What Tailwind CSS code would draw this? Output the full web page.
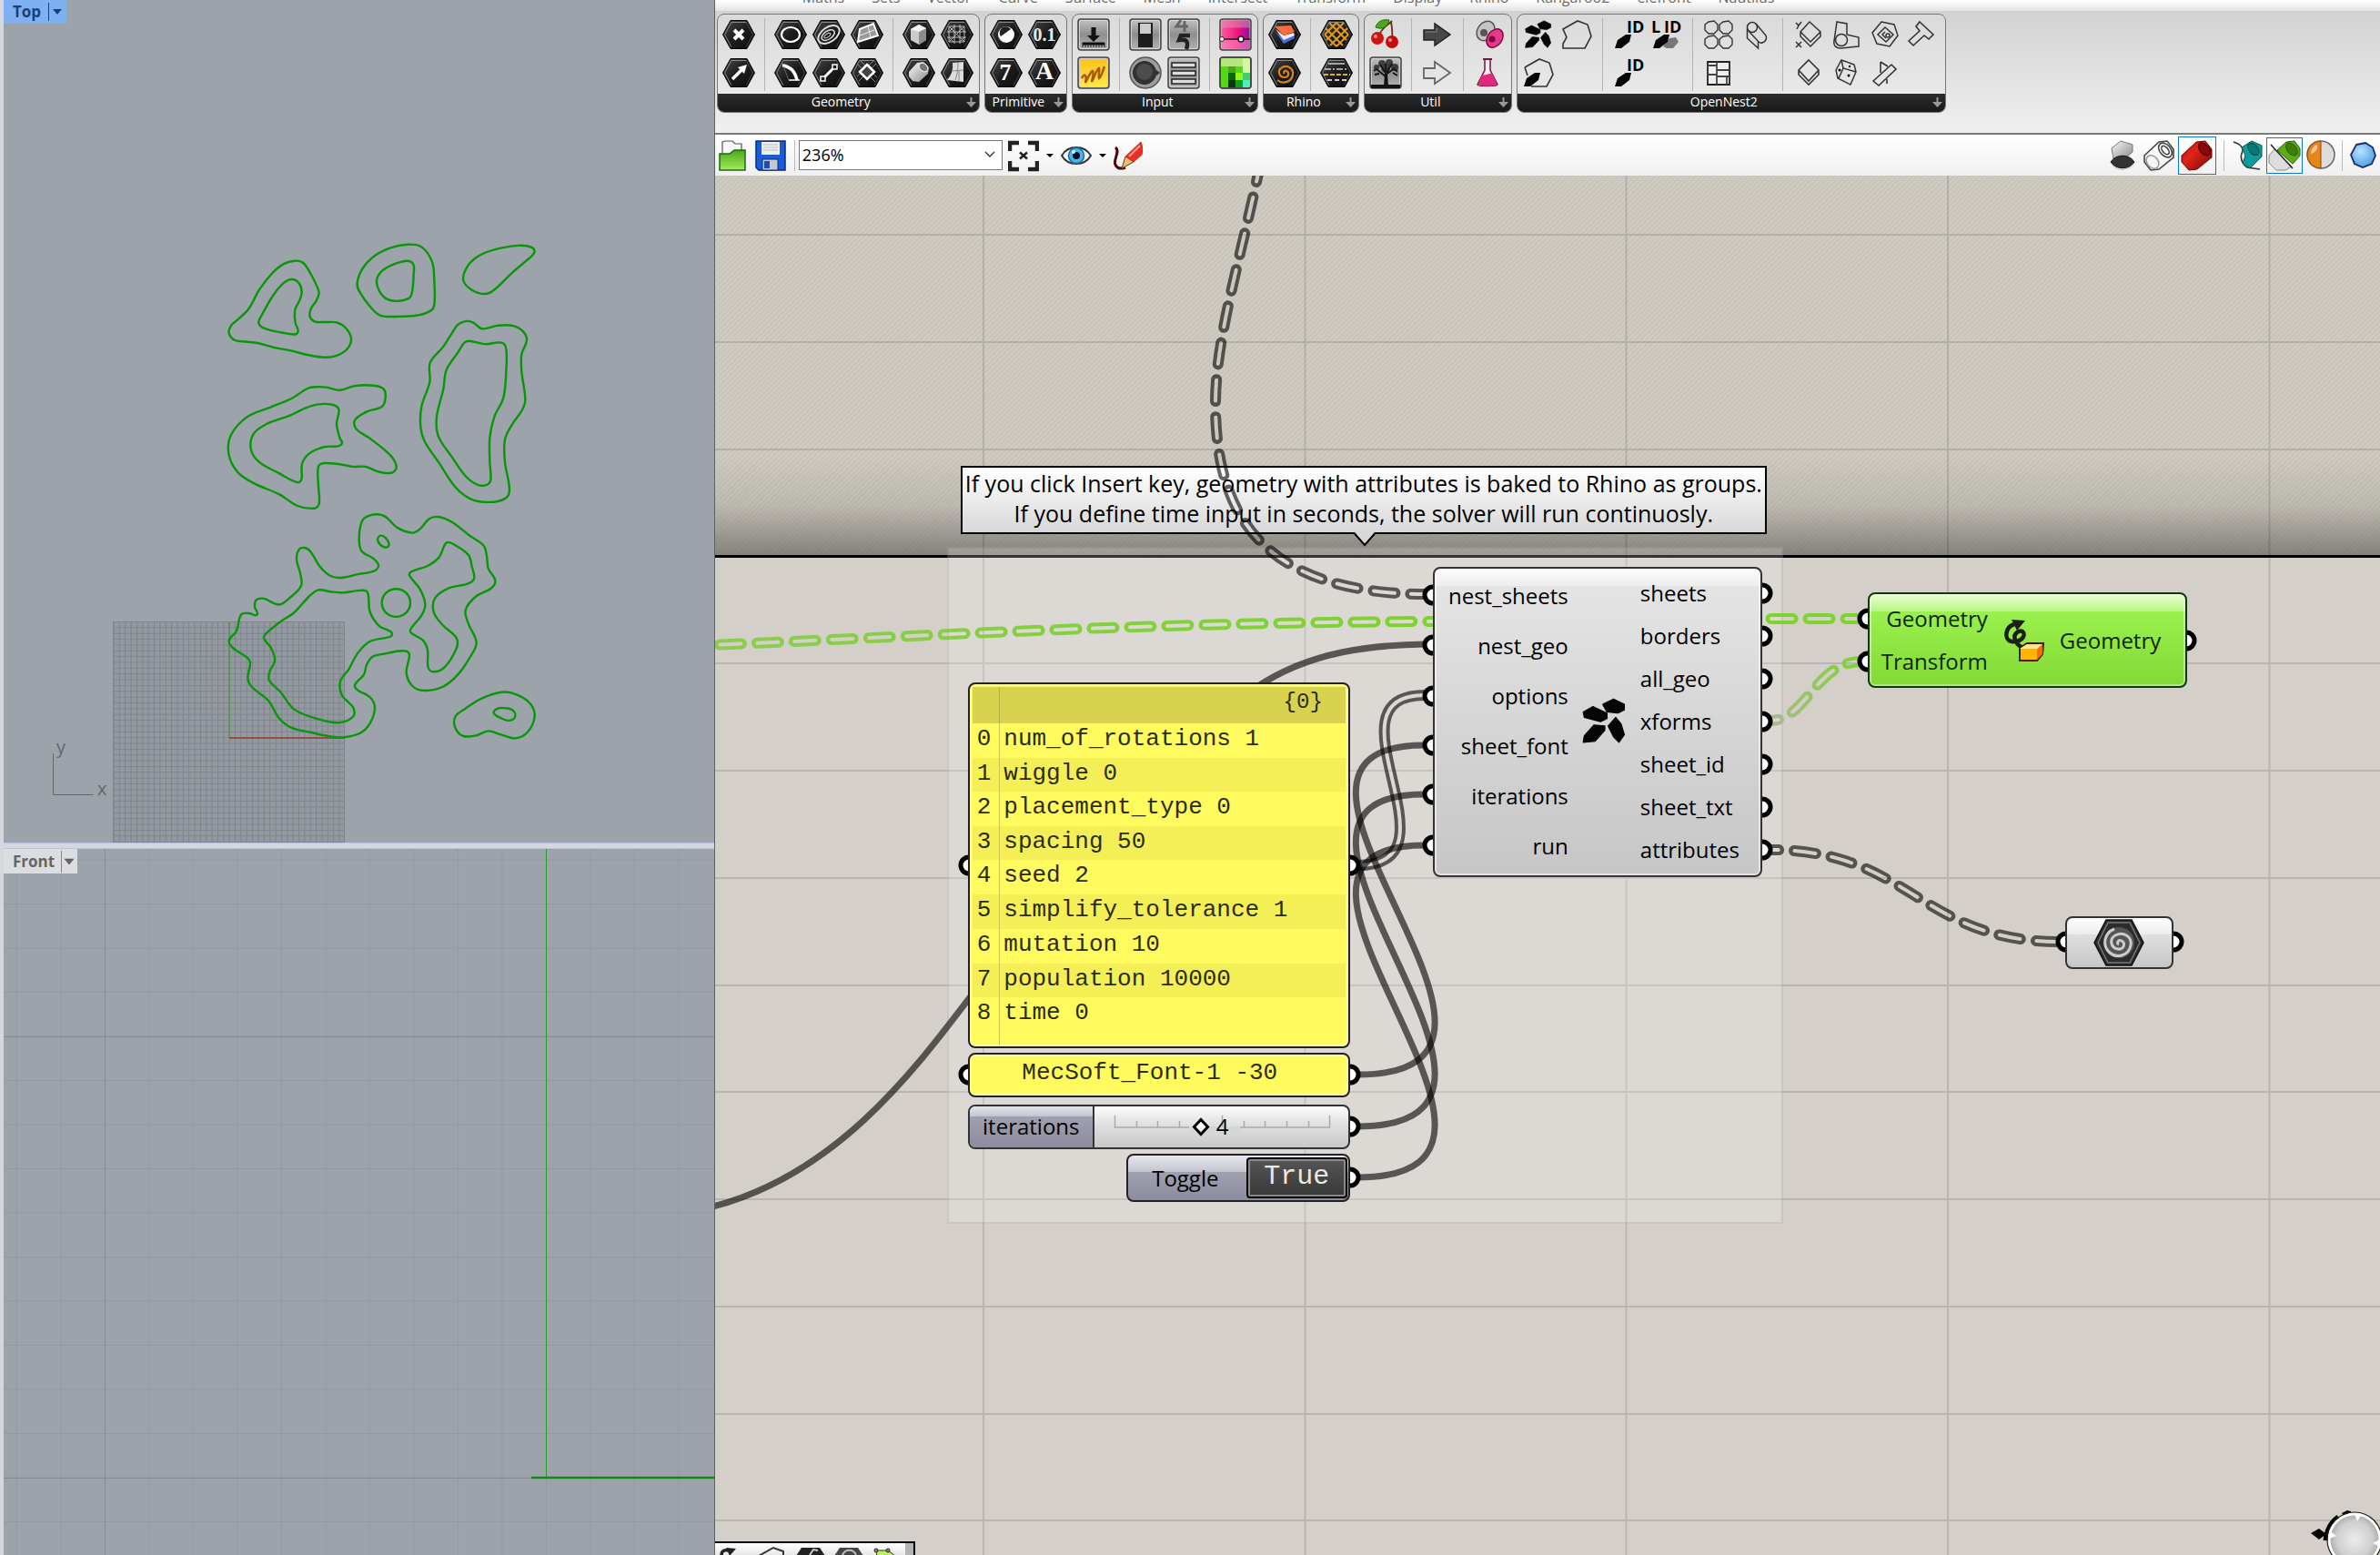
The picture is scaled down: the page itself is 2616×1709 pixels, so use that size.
<!DOCTYPE html>
<html lang="en">
<head>
<meta charset="utf-8">
<title>Grasshopper – OpenNest2</title>
<script src="https://cdn.jsdelivr.net/npm/@tailwindcss/browser@4"></script>
</head>
<body class="bg-[#d5d7dc] font-['Open_Sans','Noto_Sans',sans-serif] text-black">

<!-- shared gradients and icon shapes -->
<svg class="absolute size-0" aria-hidden="true">
  <defs>
    <linearGradient id="gHex" x1="0" y1="0" x2="1" y2="1"><stop offset="0" stop-color="#4a4a4a"/><stop offset=".5" stop-color="#1c1c1c"/><stop offset="1" stop-color="#0c0c0c"/></linearGradient>
    <linearGradient id="gBtn" x1="0" y1="0" x2="0" y2="1"><stop offset="0" stop-color="#c4c4c4"/><stop offset=".5" stop-color="#8e8e8e"/><stop offset="1" stop-color="#b4b4b4"/></linearGradient>
    <linearGradient id="gPink" x1="0" y1="0" x2="1" y2="0"><stop offset="0" stop-color="#ff5a9e"/><stop offset=".6" stop-color="#f0127c"/><stop offset="1" stop-color="#8c12a0"/></linearGradient>
    <linearGradient id="gYellow" x1="0" y1="0" x2="0" y2="1"><stop offset="0" stop-color="#ffc21a"/><stop offset="1" stop-color="#ffe84a"/></linearGradient>
    <linearGradient id="gFolder" x1="0" y1="0" x2="0" y2="1"><stop offset="0" stop-color="#4aa81c"/><stop offset="1" stop-color="#a4ec58"/></linearGradient>
    <linearGradient id="gRed" x1="0" y1="0" x2="1" y2="1"><stop offset="0" stop-color="#c01010"/><stop offset=".4" stop-color="#e02418"/><stop offset="1" stop-color="#7a0404"/></linearGradient>
    <linearGradient id="gGrey" x1="0" y1="0" x2="1" y2="1"><stop offset="0" stop-color="#fafafa"/><stop offset="1" stop-color="#8c8c8c"/></linearGradient>
    <radialGradient id="gBlue" cx=".4" cy=".35" r=".7"><stop offset="0" stop-color="#b8e2ff"/><stop offset="1" stop-color="#4a9ae0"/></radialGradient>
    <radialGradient id="gBall" cx=".5" cy=".5" r=".5"><stop offset="0" stop-color="#ececec"/><stop offset=".7" stop-color="#cfcfcf"/><stop offset="1" stop-color="#aaa"/></radialGradient>
    <g id="hex"><path d="M9 2.500h18l8.500 15.500-8.500 15.500H9L.5 18z" fill="url(#gHex)" stroke="#000"/><path d="M9.800 4.500h16.400l7.300 13.500-7.300 13.500" fill="none" stroke="#555" stroke-width=".8"/><path d="M26.200 4.500H9.800L2.600 18l7.200 13.500" fill="none" stroke="#888" stroke-width="1"/></g>
    <g id="sq"><rect x="1" y="1" width="34" height="34" rx="3" fill="url(#gBtn)" stroke="#444" stroke-width="1.500"/><rect x="2.500" y="2.500" width="31" height="31" rx="2" fill="none" stroke="#ddd" stroke-width=".8"/></g>
    <g id="plus"><path d="M5.500 0v9" stroke="#999" stroke-width="2"/><path d="M0 5h11l-5.500 6z" fill="#999"/></g>
    <g id="leaves" fill="#050607" stroke="#050607" stroke-linejoin="round"><path d="M1 13l9-5 13 6v5l-6 3-15-4z"/><path d="M19 6l10-5 10 5v5l-6 3-10-1z"/><path d="M1 41l1-6 9-10 10 1v4l-9 10z"/><path d="M24 26l7-8 5 6 3 10-5 7-5-5z"/></g>
    <g id="mini" fill="#050607"><path d="M1 33l3-9 9-6h6l-2 8-9 7z"/></g>
  </defs>
</svg>

<div class="grid h-screen grid-cols-[3fr_7fr] overflow-hidden">

  <!-- Rhino viewports -->
  <aside class="grid min-w-0 grid-rows-[37fr_31fr] gap-[5px] bg-[#d5d7dc] pl-1">
    <section class="relative overflow-hidden border-b border-[#b9c4da] bg-[#9da3ab]" aria-label="Top viewport">
      <svg class="absolute inset-0 size-full" aria-hidden="true">
        <defs>
          <pattern id="cgrid" width="6.360" height="6.360" patternUnits="userSpaceOnUse" x="120.500" y="683"><path d="M0 .5h6.360M.5 0v6.360" stroke="#7f848b" stroke-width="1"/></pattern>
        </defs>
        <rect x="120" y="683" width="255" height="300" fill="#9399a0"/>
        <rect x="120" y="683" width="255" height="300" fill="url(#cgrid)"/>
        <path d="M120.500 930V683.500h254V930" fill="none" stroke="#7f848b"/>
        <path d="M248 684v127" stroke="#4a9a4a" stroke-width="1.500"/>
        <path d="M248 811h127" stroke="#9a4a4a" stroke-width="2"/>
        <path d="M54.500 828v45.500h44" fill="none" stroke="#666"/>
        <g id="contours" transform="translate(226 240) scale(.33333 .38272)" fill="none" stroke="#079707" stroke-width="2.400">
          <ellipse cx="616" cy="1104" rx="47" ry="40" vector-effect="non-scaling-stroke"/>
        </g>
        <text x="58" y="828" font-size="20" fill="#666">y</text>
        <text x="103" y="874" font-size="20" fill="#666">x</text>
      </svg>
      <button class="relative flex h-[26px] w-[69px] items-center bg-[#7fb0f2] pl-[10px] text-left text-[17px] font-bold text-[#1c3f78]">Top
        <span class="ml-[8px] h-5 border-l border-[#1c3f78]"></span>
        <svg class="ml-[4px] h-2 w-[10px]" viewBox="0 0 10 8"><path d="M0 1h10L5 7z" fill="#1c3f78"/></svg>
      </button>
    </section>
    <section class="relative overflow-hidden border-t border-[#b9c4da] bg-[#9da3ab]" aria-label="Front viewport">
      <svg class="absolute inset-0 size-full" aria-hidden="true">
        <defs>
          <pattern id="fgrid" width="48.500" height="48.500" patternUnits="userSpaceOnUse" x="14" y="11.500"><path d="M0 .5h48.500M.5 0v48.500" stroke="#939aa1"/></pattern>
        </defs>
        <rect width="100%" height="100%" fill="url(#fgrid)"/>
        <path d="M111.500 0v900M0 206.500h900" stroke="#868b92"/>
        <path d="M0 691.500h580" stroke="#868b92"/>
        <path d="M596.500 0v691" stroke="#2a9a2a"/>
        <path d="M580 691h240" stroke="#148a14" stroke-width="2.500"/>
      </svg>
      <button class="relative flex h-[27px] w-[81px] items-center bg-[#dcdde1] pl-[10px] text-left text-[17px] font-bold text-[#666]">Front
        <span class="ml-[7px] h-6 border-l border-[#888]"></span>
        <svg class="ml-[3px] h-2 w-[10px]" viewBox="0 0 10 8"><path d="M0 1h10L5 7z" fill="#666" stroke="#444" stroke-width=".5"/></svg>
      </button>
    </section>
  </aside>

  <!-- Grasshopper window -->
  <main class="flex min-w-0 flex-col border-l border-[#5c6065] bg-[#f0f0f0]">
    <div class="h-3 overflow-hidden bg-linear-to-b from-white to-[#e4e4e4]">
      <nav class="ml-[82px] h-3 rounded-bl-xl border-b border-l border-[#999] bg-[#f0f0f0] pl-[13px]">
        <ul class="-mt-[15px] flex gap-[30px] text-[16px] leading-6 whitespace-nowrap text-[#6a6a6a]">
          <li><a href="#">Maths</a></li><li><a href="#">Sets</a></li><li><a href="#">Vector</a></li><li><a href="#">Curve</a></li><li><a href="#">Surface</a></li><li><a href="#">Mesh</a></li><li><a href="#">Intersect</a></li><li><a href="#">Transform</a></li><li><a href="#">Display</a></li><li><a href="#">Rhino</a></li><li><a href="#">Kangaroo2</a></li><li><a href="#">elefront</a></li><li><a href="#">Nautilus</a></li>
        </ul>
      </nav>
    </div>

    <!-- ribbon -->
    <div class="flex h-[134px] gap-[5px] bg-linear-to-b from-[#d2d2d2] to-[#f0f0f0] pt-[3px] pl-[2px]">
      <section class="flex h-[109px] w-[289px] shrink-0 flex-col overflow-hidden rounded-lg border border-[#777] bg-linear-to-b from-[#dadada] to-[#ececec]">
        <div class="flex h-[87px] pt-[4px] pl-[5px]">
          <div class="grid content-start gap-[6px]">
            <button aria-label="Point"><svg class="size-9" viewBox="0 0 36 36"><use href="#hex"/><path d="M13 13l10 10M23 13L13 23" stroke="#fff" stroke-width="4"/></svg></button>
            <button aria-label="Vector"><svg class="size-9" viewBox="0 0 36 36"><use href="#hex"/><path d="M11 25l10-10" stroke="#fff" stroke-width="3.500"/><path d="M17 12l10-3-3 10z" fill="#fff"/></svg></button>
          </div>
          <span class="mx-[10px] h-20 w-px bg-[#b4b4b4]"></span>
          <div class="grid grid-cols-3 content-start gap-[6px]">
            <button aria-label="Circle"><svg class="size-9" viewBox="0 0 36 36"><use href="#hex"/><ellipse cx="18" cy="18" rx="10" ry="8" fill="none" stroke="#fff" stroke-width="2.200"/></svg></button>
            <button aria-label="Curve"><svg class="size-9" viewBox="0 0 36 36"><use href="#hex"/><g transform="rotate(-35 18 18)" fill="none" stroke="#ddd"><ellipse cx="18" cy="18" rx="13" ry="8" stroke-width="2"/><ellipse cx="17" cy="18" rx="8" ry="4.500" stroke-width="1.500"/><ellipse cx="16" cy="18" rx="4" ry="1.800"/></g></svg></button>
            <button aria-label="Plane"><svg class="size-9" viewBox="0 0 36 36"><use href="#hex"/><path d="M10 12l15-6 5 13-22 7z" fill="#999" stroke="#fff" stroke-width="2"/><path d="M10 19l16-6M19 9l3 12" stroke="#eee"/></svg></button>
            <button aria-label="Arc"><svg class="size-9" viewBox="0 0 36 36"><use href="#hex"/><path d="M9 10c9 1 14 7 16 16" fill="none" stroke="#fff" stroke-width="3.500"/><path d="M16 26h12" stroke="#fff" stroke-width="1.500"/><path d="M10 11l6 15" stroke="#666"/></svg></button>
            <button aria-label="Line"><svg class="size-9" viewBox="0 0 36 36"><use href="#hex"/><path d="M12 24l12-12" stroke="#fff" stroke-width="3"/><path d="M9 22h5v5H9zM22 9h5v5h-5z" fill="#222" stroke="#fff" stroke-width="1.500"/></svg></button>
            <button aria-label="Rectangle"><svg class="size-9" viewBox="0 0 36 36"><use href="#hex"/><path d="M8 9l19 19M28 8L9 27M11 5l18 18M25 5L7 22" stroke="#888"/><path d="M18 9l8 8-8 8-8-8z" fill="#444" stroke="#fff" stroke-width="2.500"/></svg></button>
          </div>
          <span class="mx-[10px] h-20 w-px bg-[#b4b4b4]"></span>
          <div class="grid grid-cols-2 content-start gap-[6px]">
            <button aria-label="Box"><svg class="size-9" viewBox="0 0 36 36"><use href="#hex"/><path d="M9 12l9-5 8 4v13l-8 5-9-5z" fill="#ccc"/><path d="M18 15l8-4v13l-8 5z" fill="#8c8c8c"/><path d="M9 12l9-5 8 4-8 4z" fill="#f4f4f4"/></svg></button>
            <button aria-label="Mesh"><svg class="size-9" viewBox="0 0 36 36"><use href="#hex"/><path d="M9 9h17v17H9zM15 7v21M21 7v21M7 15h21M7 21h21M9 9l17 17M26 9L9 26M9 15l6-6M21 26l5-5M9 21l5 5M21 9l5 6" fill="none" stroke="#bbb"/></svg></button>
            <button aria-label="Brep"><svg class="size-9" viewBox="0 0 36 36"><use href="#hex"/><path d="M7 17l9-10 7-1 6 6-1 7-10 9-7-1-4-5z" fill="url(#gGrey)"/><ellipse cx="23" cy="12" rx="5.500" ry="4" fill="#777" stroke="#eee" transform="rotate(45 23 12)"/></svg></button>
            <button aria-label="Surface"><svg class="size-9" viewBox="0 0 36 36"><use href="#hex"/><path d="M13 7l12-1v22l-18-2c4-5 7-10 6-19z" fill="#ddd"/><path d="M19 7c0 8-1 13-3 19M12 16l13-1M20 16v11" stroke="#888" fill="none"/></svg></button>
          </div>
        </div>
        <h2 class="relative flex-1 bg-linear-to-b from-[#2c2c2c] to-[#191919] pr-4 text-center text-[14px] leading-[18px] text-white">Geometry<svg class="absolute top-1 right-[3px] h-3 w-[11px]"><use href="#plus"/></svg></h2>
      </section>

      <section class="flex h-[109px] w-[91px] shrink-0 flex-col overflow-hidden rounded-lg border border-[#777] bg-linear-to-b from-[#dadada] to-[#ececec]">
        <div class="grid h-[87px] grid-cols-[36px_36px] content-start gap-[6px] pt-[4px] pl-[5px]">
          <button aria-label="Boolean"><svg class="size-9" viewBox="0 0 36 36"><use href="#hex"/><circle cx="18" cy="18" r="9" fill="#fff"/><path d="M12 20a6.500 6.500 0 0 1 11-8z" fill="#222"/></svg></button>
          <button aria-label="Number"><svg class="size-9" viewBox="0 0 36 36"><use href="#hex"/><text x="18" y="25" text-anchor="middle" font-family="Liberation Serif,serif" font-size="20" font-weight="bold" fill="#e8e8e8">0.1</text></svg></button>
          <button aria-label="Integer"><svg class="size-9" viewBox="0 0 36 36"><use href="#hex"/><text x="17" y="26" text-anchor="middle" font-family="Liberation Serif,serif" font-size="26" font-weight="bold" fill="#fff">7</text></svg></button>
          <button aria-label="Text"><svg class="size-9" viewBox="0 0 36 36"><use href="#hex"/><text x="18" y="25" text-anchor="middle" font-family="Liberation Serif,serif" font-size="28" font-weight="bold" fill="#fff">A</text></svg></button>
        </div>
        <h2 class="relative flex-1 bg-linear-to-b from-[#2c2c2c] to-[#191919] pr-4 text-center text-[14px] leading-[18px] text-white">Primitive<svg class="absolute top-1 right-[3px] h-3 w-[11px]"><use href="#plus"/></svg></h2>
      </section>

      <section class="flex h-[109px] w-[205px] shrink-0 flex-col overflow-hidden rounded-lg border border-[#777] bg-linear-to-b from-[#dadada] to-[#ececec]">
        <div class="flex h-[87px] pt-[4px] pl-[5px]">
          <div class="grid content-start gap-[6px]">
            <button aria-label="Button"><svg class="size-9" viewBox="0 0 36 36"><use href="#sq"/><path d="M15.500 10h5v9h4.500l-7 7-7-7h4.500z" fill="#111"/><path d="M6 27h24v2H6zM6 29v3M9 29v3M12 29v3M15 29v3M18 29v3M21 29v3M24 29v3M27 29v3M30 29v3" fill="#111" stroke="#111"/></svg></button>
            <button aria-label="Graffiti"><svg class="size-9" viewBox="0 0 36 36"><use href="#sq"/><rect x="3" y="3" width="30" height="30" fill="url(#gYellow)"/><path d="M5 24c3-6 6-4 4 5 3-6 7-14 8-13 2 2-1 10-1 12 3-6 6-15 8-15 1 1-1 9 0 11 3-2 4-8 6-13" fill="none" stroke="#a85a08" stroke-width="2.500"/></svg></button>
          </div>
          <span class="mx-[10px] h-20 w-px bg-[#b4b4b4]"></span>
          <div class="grid grid-cols-2 content-start gap-[6px]">
            <button aria-label="Boolean toggle"><svg class="size-9" viewBox="0 0 36 36"><use href="#sq"/><rect x="10" y="5" width="16" height="27" fill="#1c1c1c"/><rect x="12" y="6" width="12" height="11" fill="#ccc"/></svg></button>
            <button aria-label="Digit scroller"><svg class="size-9" viewBox="0 0 36 36"><use href="#sq"/><path d="M15 2l-5 7h13M19 3v12" fill="none" stroke="#666" stroke-width="3"/><path d="M25 19H15l-2 5c8-1 11 1 8 10" fill="none" stroke="#222" stroke-width="4.500"/></svg></button>
            <button aria-label="Knob"><svg class="size-9" viewBox="0 0 36 36"><circle cx="18" cy="18" r="17" fill="#9c9c9c" stroke="#555" stroke-width="1.500"/><circle cx="17" cy="18" r="12.500" fill="#333" stroke="#222"/><path d="M26 12l8 6-8 6z" fill="#333"/><circle cx="17" cy="17" r="9" fill="#4c4c4c"/></svg></button>
            <button aria-label="Value list"><svg class="size-9" viewBox="0 0 36 36"><use href="#sq"/><path d="M5 7h26v5H5zM5 16h26v5H5zM5 25h26v5H5z" fill="#ddd" stroke="#222" stroke-width="1.500"/></svg></button>
          </div>
          <span class="mx-[10px] h-20 w-px bg-[#b4b4b4]"></span>
          <div class="grid content-start gap-[6px]">
            <button aria-label="Gradient"><svg class="size-9" viewBox="0 0 36 36"><use href="#sq"/><rect x="2.500" y="2.500" width="31" height="31" fill="url(#gPink)"/><path d="M2.500 2.500h31v8h-31z" fill="#d8a0b8" opacity=".5"/><path d="M2 23h32" stroke="#222" stroke-width="1.500"/><path d="M2 24h31v9H2z" fill="#ff9ad0" opacity=".5"/><circle cx="3" cy="23" r="2.500" fill="#fff" stroke="#222"/><circle cx="24" cy="23" r="3" fill="#fff" stroke="#222" stroke-width="1.500"/></svg></button>
            <button aria-label="Image sampler"><svg class="size-9" viewBox="0 0 36 36"><use href="#sq"/><path d="M2 2h32v32H2z" fill="#55d81c"/><path d="M2 2h32v9H2z" fill="#b4e87c"/><path d="M26 2h8v16h-8z" fill="#d0f8a0"/><path d="M10 11h8v7h-8z" fill="#4ca810"/><path d="M10 18h8v8h-8z" fill="#0a6a0a"/><path d="M10 26h8v8h-8z" fill="#053a05"/><path d="M26 18h8v8h-8z" fill="#3cd070"/><path d="M26 26h8v8h-8z" fill="#50f0b8"/><path d="M18 26h8v8h-8z" fill="#10a020"/><path d="M18 18h8v8h-8z" fill="#98f418"/><rect x="1" y="1" width="34" height="34" rx="3" fill="none" stroke="#444" stroke-width="1.500"/></svg></button>
          </div>
        </div>
        <h2 class="relative flex-1 bg-linear-to-b from-[#2c2c2c] to-[#191919] pr-4 text-center text-[14px] leading-[18px] text-white">Input<svg class="absolute top-1 right-[3px] h-3 w-[11px]"><use href="#plus"/></svg></h2>
      </section>

      <section class="flex h-[109px] w-[106px] shrink-0 flex-col overflow-hidden rounded-lg border border-[#777] bg-linear-to-b from-[#dadada] to-[#ececec]">
        <div class="flex h-[87px] pt-[4px] pl-[5px]">
          <div class="grid content-start gap-[6px]">
            <button aria-label="Layer"><svg class="size-9" viewBox="0 0 36 36"><use href="#hex"/><path d="M8 15l9 13 12-6-1-4-11 4z" fill="#4a6ae0"/><path d="M8 12l9 12 12-5-1-3-11 3z" fill="#eee"/><path d="M7 9l18-1 4 7-12 4z" fill="#ff6a3c"/></svg></button>
            <button aria-label="Spiral data"><svg class="size-9" viewBox="0 0 36 36"><use href="#hex"/><path d="M18 19c-2-1 0-4 2-3 4 2 2 7-2 7-6 0-8-7-4-10 6-5 14 0 13 7-1 8-11 11-17 6" fill="none" stroke="#d88418" stroke-width="2.200"/></svg></button>
          </div>
          <span class="mx-[10px] h-20 w-px bg-[#b4b4b4]"></span>
          <div class="grid content-start gap-[6px]">
            <button aria-label="Hatch"><svg class="size-9" viewBox="0 0 36 36"><use href="#hex"/><path d="M10 5l19 19M18 5l13 13M6 11l19 19M5 18l13 13M26 5L7 24M18 5L5 18M30 11L11 30M31 18L18 31" stroke="#e09a20" stroke-width="2"/></svg></button>
            <button aria-label="Linetype"><svg class="size-9" viewBox="0 0 36 36"><use href="#hex"/><path d="M9 8h18" stroke="#ccc" stroke-width="1.500"/><path d="M5 14h26" stroke="#ccc" stroke-width="1.500" stroke-dasharray="7 2 2 2"/><path d="M4 20h29" stroke="#e0b020" stroke-width="1.800" stroke-dasharray="5 2"/><path d="M8 26h21" stroke="#ccc" stroke-width="1.800" stroke-dasharray="5 3"/></svg></button>
          </div>
        </div>
        <h2 class="relative flex-1 bg-linear-to-b from-[#2c2c2c] to-[#191919] pr-4 text-center text-[14px] leading-[18px] text-white">Rhino<svg class="absolute top-1 right-[3px] h-3 w-[11px]"><use href="#plus"/></svg></h2>
      </section>

      <section class="flex h-[109px] w-[163px] shrink-0 flex-col overflow-hidden rounded-lg border border-[#777] bg-linear-to-b from-[#dadada] to-[#ececec]">
        <div class="flex h-[87px] pt-[4px] pl-[5px]">
          <div class="grid content-start gap-[6px]">
            <button aria-label="Cherry picker"><svg class="size-9" viewBox="0 0 36 36"><path d="M25 3c-6 6-12 8-14 16M24 4c1 8 2 10 1 18" fill="none" stroke="#6a2a14" stroke-width="1.800"/><path d="M7 10C9 3 15 1 22 2c-2 8-8 11-15 8z" fill="#4aa81c" stroke="#2a6a0a"/><circle cx="9" cy="22" r="7" fill="#d01414"/><circle cx="25" cy="26" r="7" fill="#c40c0c"/><circle cx="7" cy="20" r="2" fill="#ff9a9a"/><circle cx="23" cy="24" r="2" fill="#ff9a9a"/></svg></button>
            <button aria-label="Galapagos"><svg class="size-9" viewBox="0 0 36 36"><use href="#sq"/><path d="M2 31h32v4H2zM16 33l1-14h3l1 14z" fill="#111"/><path d="M18 22L8 14M18 20l10-7M18 20V8M18 18l-6-9M19 18l6-10M8 14l-3 2M28 14l3 3M11 19l-5 1M26 18l5 3" stroke="#111" stroke-width="1.800"/><g fill="#1a1a1a" opacity=".75"><circle cx="8" cy="12" r="3"/><circle cx="14" cy="8" r="4"/><circle cx="22" cy="7" r="4"/><circle cx="28" cy="12" r="4"/><circle cx="18" cy="13" r="5"/></g></svg></button>
          </div>
          <span class="mx-[10px] h-20 w-px bg-[#b4b4b4]"></span>
          <div class="grid content-start gap-[6px] px-[2px]">
            <button aria-label="Data input"><svg class="h-9 w-[32px]" viewBox="0 0 32 36"><path d="M1 13h12V6l17 12-17 12v-6H1z" fill="#484848" stroke="#222" stroke-width="1.500"/><path d="M3 15h12v-4" stroke="#888" fill="none"/></svg></button>
            <button aria-label="Data output"><svg class="h-9 w-[32px]" viewBox="0 0 32 36"><path d="M1 13h12V6l17 12-17 12v-6H1z" fill="#e4e4e4" stroke="#666" stroke-width="1.800"/></svg></button>
          </div>
          <span class="mx-[10px] h-20 w-px bg-[#b4b4b4]"></span>
          <div class="grid content-start gap-[6px]">
            <button aria-label="Cluster"><svg class="size-9" viewBox="0 0 36 36"><ellipse cx="14" cy="14" rx="9" ry="11.500" transform="rotate(35 14 14)" fill="#c4c4c4" stroke="#555" stroke-width="1.500"/><circle cx="12" cy="16" r="4" fill="#555"/><ellipse cx="24" cy="22" rx="8" ry="11" transform="rotate(35 24 22)" fill="#e8388c" stroke="#7a0a3c" stroke-width="1.500"/><circle cx="21" cy="23" r="3.500" fill="#7a0a3c"/></svg></button>
            <button aria-label="Flask"><svg class="size-9" viewBox="0 0 36 36"><path d="M13 3v12L5 31c0 2 22 2 22 0l-8-16V3z" fill="#f4e8ee" stroke="#6a1a3c" stroke-width="1.500"/><path d="M10 20L5.500 31c2 2 19 2 21 0L22 20c-4-3-8 2-12 0z" fill="#e0287c"/><path d="M11 3h10" stroke="#6a1a3c" stroke-width="2"/></svg></button>
          </div>
        </div>
        <h2 class="relative flex-1 bg-linear-to-b from-[#2c2c2c] to-[#191919] pr-4 text-center text-[14px] leading-[18px] text-white">Util<svg class="absolute top-1 right-[3px] h-3 w-[11px]"><use href="#plus"/></svg></h2>
      </section>

      <section class="flex h-[109px] w-[472px] shrink-0 flex-col overflow-hidden rounded-lg border border-[#777] bg-linear-to-b from-[#dadada] to-[#ececec]">
        <div class="flex h-[87px] pt-[4px] pl-[5px]">
          <div class="grid grid-cols-[36px_36px] content-start gap-[6px]">
            <button aria-label="OpenNest"><svg class="size-9" viewBox="-4 -3 49 49"><use href="#leaves"/></svg></button>
            <button aria-label="Polygon"><svg class="size-9" viewBox="0 0 36 36"><path d="M3 12l16-9 11 4 4 13-7 13H3v-5l4-7z" fill="none" stroke="#333" stroke-width="1.600"/></svg></button>
            <button aria-label="Nest polygon"><svg class="size-9" viewBox="0 0 36 36"><path d="M3 12l16-9 11 4 4 13-7 13H10M3 12l3 9" fill="none" stroke="#333" stroke-width="1.600"/><use href="#mini" x="1"/></svg></button>
          </div>
          <span class="mx-[10px] h-20 w-px bg-[#b4b4b4]"></span>
          <div class="grid grid-cols-[36px_36px] content-start gap-[6px]">
            <button aria-label="ID"><svg class="size-9" viewBox="0 0 36 36"><use href="#mini" x="2"/><text x="16" y="16" font-size="18" font-weight="bold">ID</text></svg></button>
            <button aria-label="Layer ID"><svg class="size-9" viewBox="0 0 36 36"><path d="M14 31l7-9 7-1 3 5-6 7h-7z" fill="#777"/><use href="#mini" x="2"/><text x="1" y="16" font-size="18" font-weight="bold">L</text><text x="15" y="16" font-size="18" font-weight="bold">ID</text></svg></button>
            <button aria-label="Part ID"><svg class="size-9" viewBox="0 0 36 36"><use href="#mini" x="2"/><text x="16" y="16" font-size="18" font-weight="bold">ID</text></svg></button>
          </div>
          <span class="mx-[10px] h-20 w-px bg-[#b4b4b4]"></span>
          <div class="grid grid-cols-[36px_36px] content-start gap-[6px]">
            <button aria-label="Array"><svg class="size-9" viewBox="0 0 36 36"><g fill="none" stroke="#333" stroke-width="1.400"><path d="M7 4l6-1 4 4 0 6-4 4-6 0-4-4 0-6zM23 4l6-1 4 4 0 6-4 4-6 0-4-4 0-6zM7 20l6-1 4 4 0 6-4 4-6 0-4-4 0-6zM23 20l6-1 4 4 0 6-4 4-6 0-4-4 0-6z"/></g></svg></button>
            <button aria-label="Offset"><svg class="size-9" viewBox="0 0 36 36"><g fill="none" stroke="#333" stroke-width="1.500"><circle cx="13" cy="10" r="5.500"/><path d="M7.500 11v11l12 11v-8M17 6l11 13c2 6-4 10-8 7L9 14"/></g></svg></button>
            <button aria-label="Layout"><svg class="size-9" viewBox="0 0 36 36"><path d="M6 6h24v25H6z" fill="#eee" stroke="#222" stroke-width="1.800"/><path d="M16 6v25M6 10h10M16 15h14M6 20h10M16 22h14M27 22v9" stroke="#444" stroke-width="1.800"/></svg></button>
          </div>
          <span class="mx-[10px] h-20 w-px bg-[#b4b4b4]"></span>
          <div class="grid grid-cols-[36px_36px_36px_36px] content-start gap-[6px]">
            <button aria-label="Orient XY"><svg class="size-9" viewBox="0 0 36 36"><g fill="none" stroke="#333" stroke-width="1.500"><path d="M19 4l12 11-11 11L9 15zM9 16v4l11 11 11-11v-4M4 5l3 3 3-4M7 8l-2 4M4 26l6 6M10 26l-6 6"/></g></svg></button>
            <button aria-label="Pipe"><svg class="size-9" viewBox="0 0 36 36"><g fill="none" stroke="#333" stroke-width="1.500"><path d="M7 4l11 2v12l13 3v10l-20 2c-5 0-8-3-7-8z"/><circle cx="12" cy="24" r="6.500"/></g></svg></button>
            <button aria-label="Nut"><svg class="size-9" viewBox="0 0 36 36"><g fill="none" stroke="#333" stroke-width="1.500"><path d="M14 4l14 3 4 12-9 12-14-3-5-12z"/><path d="M18 10l9 8-8 8-9-8zM18 15l-3 3 4 4"/><circle cx="21" cy="19" r="2"/></g></svg></button>
            <button aria-label="Hammer"><svg class="size-9" viewBox="0 0 36 36"><path d="M14 4l15 14-5 5-5-4-12 11-5-5 12-11-4-5z" fill="none" stroke="#333" stroke-width="1.600"/></svg></button>
            <button aria-label="Stack"><svg class="size-9" viewBox="0 0 36 36"><path d="M18 4l11 11-11 12L7 15zM7 16v4l11 11 11-11v-4" fill="none" stroke="#333" stroke-width="1.600"/></svg></button>
            <button aria-label="Dice"><svg class="size-9" viewBox="0 0 36 36"><g fill="none" stroke="#333" stroke-width="1.500"><path d="M12 4l14 5 2 8-6 14-14-7-2-9zM12 4l2 9 14 4M14 13l-5 11"/></g><circle cx="20" cy="21" r="1.500"/><circle cx="10" cy="15" r="1.500"/><circle cx="21" cy="11" r="1.200"/></svg></button>
            <button aria-label="Saw"><svg class="size-9" viewBox="0 0 36 36"><path d="M5 27L25 9l5 5L11 32zM13 6l8 5M13 6v12M20 25v5" fill="none" stroke="#333" stroke-width="1.600"/></svg></button>
          </div>
        </div>
        <h2 class="relative flex-1 bg-linear-to-b from-[#2c2c2c] to-[#191919] pr-4 text-center text-[14px] leading-[18px] text-white">OpenNest2<svg class="absolute top-1 right-[3px] h-3 w-[11px]"><use href="#plus"/></svg></h2>
      </section>
    </div>

    <!-- canvas toolbar -->
    <div class="flex h-[47px] shrink-0 items-center border-t-2 border-[#7a7a7a] bg-linear-to-b from-white to-[#f0f0f0] pl-1">
      <button aria-label="Open"><svg class="h-9 w-[30px]" viewBox="0 0 30 36"><path d="M4 17V3l3-1h8l3 3h7v14z" fill="#f8f8f8" stroke="#555" stroke-width="1.200"/><path d="M1 16h11l5-4h12v22H1z" fill="url(#gFolder)" stroke="#1c6a14" stroke-width="1.500"/></svg></button>
      <button class="ml-[10px]" aria-label="Save"><svg class="h-9 w-[34px]" viewBox="0 0 34 36"><path d="M1 2h32v32H4l-3-3z" fill="#1a5cd8" stroke="#0a2a80" stroke-width="1.500"/><path d="M7 3h20v14H7z" fill="#f0f0f0"/><path d="M9 6h16M9 9h16M9 12h16" stroke="#bbb"/><path d="M8 22h17v12H8z" fill="#c4c8d0" stroke="#0a2a80"/><path d="M10 24h6v8h-6z" fill="#1a4cb8"/></svg></button>
      <span class="mr-1 ml-[9px] h-[34px] w-px bg-[#bbb]"></span>
      <div class="relative mr-[6px] flex">
        <select aria-label="Zoom" class="h-[33px] w-[224px] appearance-none border border-[#777] bg-white pl-[3px] text-[18px]"><option>236%</option></select>
        <svg class="pointer-events-none absolute top-3 right-[8px] h-2 w-3" viewBox="0 0 12 8"><path d="M1 1l5 5 5-5" fill="none" stroke="#333" stroke-width="1.300"/></svg>
      </div>
      <button aria-label="Zoom extents"><svg class="h-9 w-[34px]" viewBox="0 0 34 36"><path d="M2 13V4h10M22 4h10v9M32 24v9H22M12 33H2v-9" fill="none" stroke="#222" stroke-width="4.500"/><path d="M13 14.500l8 7M21 14.500l-8 7" stroke="#222" stroke-width="2.500"/></svg></button>
      <svg class="mx-2 h-2 w-2" viewBox="0 0 8 8"><path d="M0 2h8L4 6z"/></svg>
      <button aria-label="Preview"><svg class="h-9 w-[34px]" viewBox="0 0 34 36"><path d="M1 18C8 6 26 6 33 18 26 30 8 30 1 18z" fill="#eef4f8" stroke="#333" stroke-width="2"/><circle cx="17" cy="18" r="8.500" fill="#4cb4e8" stroke="#1a6a9a" stroke-width="1.500"/><circle cx="17" cy="18" r="4" fill="#0a0a2a"/><circle cx="14" cy="14" r="2" fill="#d8f4ff"/></svg></button>
      <svg class="mx-2 h-2 w-2" viewBox="0 0 8 8"><path d="M0 2h8L4 6z"/></svg>
      <button aria-label="Sketch"><svg class="h-9 w-[34px]" viewBox="1 0 34 36"><path d="M3 9c6 4-3 14 0 19 2 4 6 5 11 3" fill="none" stroke="#4a0a0a" stroke-width="3"/><path d="M10 32l4-13 8 2 1 4z" fill="#e8c070" stroke="#6a3a0a"/><path d="M14 19L31 3c2 4 2 11 1 14l-9 8z" fill="#e83028" stroke="#c03020"/><path d="M18 19L30 7" stroke="#ffa090" stroke-width="2"/></svg></button>

      <div class="ml-auto flex items-center pr-1">
        <button class="mr-[7px]" aria-label="No preview"><svg class="h-9 w-[30px]" viewBox="0 0 30 36"><path d="M3 10l10-8 13 4v8l-8 7H5z" fill="url(#gGrey)" stroke="#777"/><path d="M2 25c6-9 20-9 26 0-6 9-20 9-26 0z" fill="#333" stroke="#111"/><path d="M4 29c6 6 16 6 22 0" stroke="#ccc" fill="none"/></svg></button>
        <button class="mr-[3px]" aria-label="Wireframe preview"><svg class="size-9" viewBox="0 0 36 36"><g fill="none" stroke="#444" stroke-width="1.600"><path d="M2 18L18 3l9-1 7 9v9L18 33l-9 1-7-9z"/><ellipse cx="25" cy="12" rx="6" ry="9" transform="rotate(-40 25 12)"/><ellipse cx="25" cy="12" rx="3" ry="5.500" transform="rotate(-40 25 12)"/><ellipse cx="11" cy="25" rx="6" ry="8" stroke="#999" transform="rotate(-40 11 25)"/></g></svg></button>
        <button class="border border-[#0a78d4] p-[2px]" aria-label="Shaded preview"><svg class="size-9" viewBox="0 0 36 36"><path d="M1 18L17 3l10-1 7 9v9L18 33l-9 1-8-9z" fill="url(#gRed)" stroke="#6a0404"/><ellipse cx="26" cy="11" rx="5" ry="8" transform="rotate(-40 26 11)" fill="#8c0808" stroke="#5a0404" stroke-width="1.500"/></svg></button>
        <span class="mx-[8px] h-[34px] w-px bg-[#bbb]"></span>
        <button class="mr-[4px]" aria-label="Document preview"><svg class="h-9 w-[34px]" viewBox="0 0 34 36"><path d="M2 3c6 2 10 4 10 10-4 8 0 14 5 18l14 2" fill="none" stroke="#333" stroke-width="1.500"/><path d="M11 9l11-7 11 5v12L20 32l-8-5 3-9z" fill="#0c9c9c" stroke="#055"/><ellipse cx="24" cy="11" rx="5" ry="7.500" transform="rotate(-40 24 11)" fill="#067878" stroke="#044"/></svg></button>
        <button class="border border-[#0a78d4] p-px" aria-label="Selected preview"><svg class="size-9" viewBox="0 0 36 36"><path d="M1 18l6-7 19 19-7 4H9l-8-8z" fill="#ddd" stroke="#888"/><path d="M10 12L20 3l9-1 6 8v8L27 27z" fill="#5cac14" stroke="#2a6004"/><ellipse cx="26" cy="11" rx="5" ry="8" transform="rotate(-40 26 11)" fill="#3c8008" stroke="#2a6004"/><path d="M3 6l24 26" stroke="#222" stroke-width="1.500"/></svg></button>
        <button class="ml-[3px]" aria-label="Quality"><svg class="h-9 w-[34px]" viewBox="0 0 34 36"><circle cx="17" cy="17" r="15" fill="#dcdcdc" stroke="#666" stroke-width="1.500"/><path d="M17 2a15 15 0 0 0 0 30z" fill="#e8841c" stroke="#8a4a0a"/><path d="M13 6c-5 2-7 6-7 10 4-1 8-4 7-10z" fill="#ffc890"/></svg></button>
        <span class="ml-[6px] h-[34px] w-px bg-[#bbb]"></span>
        <button class="ml-[7px]" aria-label="Mesh settings"><svg class="h-9 w-[30px]" viewBox="0 0 30 36"><path d="M8 6l10-2 8 5 3 9-4 9-10 4-9-4-4-10z" fill="url(#gBlue)" stroke="#1c2a70" stroke-width="1.800"/></svg></button>
      </div>
    </div>

    <!-- node canvas -->
    <div class="relative min-h-0 flex-1 overflow-hidden bg-[#d4cfc8]">
      <div class="absolute inset-x-0 top-0 h-[420px] border-b-3 border-black bg-[repeating-linear-gradient(135deg,#cfcbc2_0px,#cfcbc2_2px,#c9c5bb_2px,#c9c5bb_4px)]">
        <div class="absolute inset-x-0 bottom-0 h-[110px] bg-linear-to-b from-black/0 via-black/8 to-black/35"></div>
      </div>
      <svg class="absolute inset-0 size-full" aria-hidden="true">
        <path d="M295 0v1516M648.500 0v1516M1001.500 0v1516M1355 0v1516M1708.500 0v1516M0 65h1832M0 183h1832M0 301h1832M0 536h1832M0 654h1832M0 772h1832M0 890h1832M0 1007h1832M0 1125h1832M0 1243h1832M0 1361h1832M0 1478h1832" stroke="#000" stroke-opacity=".12" stroke-width="2"/>
      </svg>
      <!-- group -->
      <div class="absolute top-[408px] left-[255px] h-[744px] w-[919px] border-2 border-black/8 bg-white/20"></div>

      <!-- balloon note -->
      <div class="absolute top-[319px] left-[270px] flex h-[75px] w-[886px] flex-col items-center justify-center border-2 border-black bg-linear-to-b from-white to-[#d8d8d8] pb-1 text-[25px] leading-[33px] whitespace-nowrap">
        <p>If you click Insert key, geometry with attributes is baked to Rhino as groups.</p>
        <p>If you define time input in seconds, the solver will run continuosly.</p>
        <svg class="absolute top-[70px] left-[430px] h-[17px] w-6" viewBox="0 0 24 17"><path d="M0 0l12 14L24 0z" fill="#d8d8d8"/><path d="M0 1.500L12 15 24 1.500" fill="none" stroke="#000" stroke-width="2"/></svg>
      </div>

      <!-- wires and ports, in window coordinates -->
      <svg class="absolute inset-0 size-full" aria-hidden="true">
        <defs>
          <path id="w1" d="M1384 186C1362 290 1337 370 1336 440C1335 560 1382 652 1566 653"/>
          <path id="w2" d="M780 709C1000 700 1250 684 1575 683"/>
          <path id="w3" d="M1946.600 680H2042"/>
          <path id="w4" d="M1946 792C1985 792 1996 727 2046 727"/>
          <path id="w5" d="M1946 934C2100 934 2110 1035 2264 1035"/>
          <path id="w6" d="M1492 951C1612 951 1450 764 1566 764"/>
          <linearGradient id="gx" gradientUnits="userSpaceOnUse" x1="1950" y1="0" x2="2042" y2="0"><stop offset="0" stop-color="#a9b994"/><stop offset="1" stop-color="#7fd430"/></linearGradient>
          <linearGradient id="gg" gradientUnits="userSpaceOnUse" x1="786" y1="0" x2="1575" y2="0"><stop offset="0" stop-color="#8ccc50"/><stop offset="1" stop-color="#7cd42c"/></linearGradient>
          <mask id="mDark" maskUnits="userSpaceOnUse" x="780" y="180" width="1840" height="1530">
            <g fill="none" stroke-linecap="round">
              <g stroke="#fff" stroke-width="12" stroke-dasharray="24 17"><use href="#w1" stroke-dashoffset="10"/><use href="#w5" stroke-dashoffset="15"/></g>
              <g stroke="#000" stroke-width="4" stroke-dasharray="23 18"><use href="#w1" stroke-dashoffset="9.500"/><use href="#w5" stroke-dashoffset="14.500"/></g>
              <use href="#w6" stroke="#fff" stroke-width="12"/><use href="#w6" stroke="#000" stroke-width="4"/>
            </g>
          </mask>
          <mask id="mGreen" maskUnits="userSpaceOnUse" x="780" y="180" width="1840" height="1530">
            <g fill="none" stroke-linecap="round">
              <g stroke="#fff" stroke-width="12" stroke-dasharray="24 17"><use href="#w2" stroke-dashoffset="30"/><use href="#w3"/><use href="#w4" stroke-dashoffset="15"/></g>
              <g stroke="#000" stroke-width="4" stroke-dasharray="23 18"><use href="#w2" stroke-dashoffset="29.500"/><use href="#w3" stroke-dashoffset="-.5"/><use href="#w4" stroke-dashoffset="14.500"/></g>
            </g>
          </mask>
        </defs>
        <g transform="translate(-786 -193)">
          <rect x="780" y="180" width="1840" height="1530" fill="#000" fill-opacity=".6" mask="url(#mDark)"/>
          <g mask="url(#mGreen)"><rect x="780" y="600" width="900" height="200" fill="url(#gg)"/><rect x="1900" y="650" width="200" height="50" fill="#7cd42c"/><rect x="1900" y="700" width="200" height="110" fill="url(#gx)"/></g>
          <g fill="none" stroke="#000" stroke-opacity=".6" stroke-width="7">
            <path d="M780 1327C930 1290 1020 1155 1080 1078"/>
            <path d="M1380 756C1440 715 1510 709 1566 708"/>
            <path d="M1492 1181C1745 1181 1330 819 1566 819"/>
            <path d="M1492 1238C1745 1238 1330 873 1566 873"/>
            <path d="M1492 1294C1745 1294 1330 929 1566 929"/>
          </g>
          <g fill="#fff" stroke="#000" stroke-width="5">
            <circle cx="1575" cy="654" r="9"/><circle cx="1575" cy="709" r="9"/><circle cx="1575" cy="765" r="9"/><circle cx="1575" cy="819" r="9"/><circle cx="1575" cy="873" r="9"/><circle cx="1575" cy="929" r="9"/>
            <circle cx="1937" cy="652" r="9"/><circle cx="1937" cy="699" r="9"/><circle cx="1937" cy="746" r="9"/><circle cx="1937" cy="793" r="9"/><circle cx="1937" cy="840" r="9"/><circle cx="1937" cy="887" r="9"/><circle cx="1937" cy="934" r="9"/>
            <circle cx="2053" cy="680" r="9"/><circle cx="2053" cy="727" r="9"/><circle cx="2403" cy="704" r="9"/>
            <circle cx="2271" cy="1035" r="9"/><circle cx="2389" cy="1035" r="9"/>
            <circle cx="1065" cy="951" r="9"/><circle cx="1484" cy="951" r="9"/><circle cx="1065" cy="1181" r="9"/><circle cx="1484" cy="1181" r="9"/><circle cx="1484" cy="1238" r="9"/><circle cx="1484" cy="1294" r="9"/>
          </g>
        </g>
      </svg>

      <!-- OpenNest component -->
      <article class="absolute top-[430px] left-[789px] flex h-[341px] w-[362px] items-start rounded-lg border-2 border-[#333] bg-[linear-gradient(#fdfdfd,#ededed_19px,#e4e4e4_19px,#c6c6c6)] text-[24px] shadow-[inset_0_0_0_2px_#ffffff80]">
        <ul class="w-[147px] pt-[2px] text-right leading-[55px]">
          <li>nest_sheets</li><li>nest_geo</li><li>options</li><li>sheet_font</li><li>iterations</li><li>run</li>
        </ul>
        <svg class="mt-[142px] ml-[15px] h-[50px] w-[50px]" viewBox="0 0 42 42"><use href="#leaves"/></svg>
        <ul class="ml-[14px] pt-[3px] leading-[47px]">
          <li>sheets</li><li>borders</li><li>all_geo</li><li>xforms</li><li>sheet_id</li><li>sheet_txt</li><li>attributes</li>
        </ul>
      </article>

      <!-- Transform component -->
      <article class="absolute top-[458px] left-[1267px] flex h-[105px] w-[351px] items-center rounded-lg border-2 border-[#0c3c04] bg-[linear-gradient(#e8ffd4,#b8f484_19px,#9af04c_19px,#84da34)] text-[24px] text-[#0c2404] shadow-[inset_0_0_0_2px_#ffffff60]">
        <ul class="w-[130px] pb-[2px] text-right leading-[47px]"><li>Geometry</li><li>Transform</li></ul>
        <svg class="ml-[17px] h-[50px] w-[46px]" viewBox="0 0 46 50"><path d="M12 7C2 10 0 24 9 26s16-6 13-10-12 1-9 8 6 8 10 9" fill="none" stroke="#1c2014" stroke-width="4.500"/><path d="M9 2l15 1-9 11z" fill="#1c2014"/><path d="M18 33l8-5h18l-1 12-6 7H18z" fill="#ffb400" stroke="#3c2000" stroke-width="2"/><path d="M18 34l8-5h17l-6 5z" fill="#ffe490"/><path d="M37 35l6-6v11l-6 6z" fill="#f07000"/></svg>
        <span class="ml-[16px]">Geometry</span>
      </article>

      <!-- data parameter -->
      <article class="absolute top-[814px] left-[1484px] flex h-[58px] w-[119px] items-center justify-center rounded-lg border-2 border-[#333] bg-[linear-gradient(#fdfdfd,#ededed_18px,#e0e0e0_18px,#c6c6c6)]">
        <svg class="h-[52px] w-[56px]" viewBox="0 0 56 52"><path d="M14 1h28l13 25-13 25H14L1 26z" fill="#2c2c2c" stroke="#111" stroke-width="1.500"/><path d="M16 4h24l11 22-11 22H16L5 26z" fill="none" stroke="#777" stroke-width="1.500"/><circle cx="28" cy="26" r="17" fill="#555"/><path d="M28 28c-3-1-1-6 3-4 5 3 2 10-4 9-8-1-10-11-3-15 9-5 19 2 17 11-2 11-15 15-23 8-9-8-6-22 5-26" fill="none" stroke="#ccc" stroke-width="3"/></svg>
      </article>

      <!-- options panel -->
      <article class="absolute top-[557px] left-[278px] flex h-[402px] w-[420px] flex-col overflow-hidden rounded-lg border-2 border-[#222] bg-[#fffa5e] font-['Liberation_Mono',monospace] text-[26px] text-[#2c2c10] shadow-[inset_0_0_0_2px_#ffffa0]">
        <table class="m-[3px] border-collapse leading-[34px] [&_td]:align-top [&_td:first-child]:border-r [&_td:first-child]:border-[#ccc64c] [&_td:first-child]:pl-[5px] [&_td:last-child]:pl-1">
          <thead><tr class="h-10 bg-[#d8d24e] text-[24px]"><th class="w-[30px] border-r border-[#b4ae40]"></th><th class="pr-[25px] text-right align-top font-normal">{0}</th></tr></thead>
          <tbody>
            <tr class="h-[38px]"><td>0</td><td>num_of_rotations 1</td></tr>
            <tr class="h-[37px] bg-[#f4ef56]"><td>1</td><td>wiggle 0</td></tr>
            <tr class="h-[38px]"><td>2</td><td>placement_type 0</td></tr>
            <tr class="h-[37px] bg-[#f4ef56]"><td>3</td><td>spacing 50</td></tr>
            <tr class="h-[38px]"><td>4</td><td>seed 2</td></tr>
            <tr class="h-[38px] bg-[#f4ef56]"><td>5</td><td>simplify_tolerance 1</td></tr>
            <tr class="h-[38px]"><td>6</td><td>mutation 10</td></tr>
            <tr class="h-[37px] bg-[#f4ef56]"><td>7</td><td>population 10000</td></tr>
            <tr class="h-[53px]"><td>8</td><td>time 0</td></tr>
          </tbody>
        </table>
      </article>

      <!-- font panel -->
      <article class="absolute top-[964px] left-[278px] flex h-[49px] w-[420px] items-center justify-center rounded-lg border-2 border-[#222] bg-[#fffa5e] pr-[20px] pb-1 font-['Liberation_Mono',monospace] text-[26px] whitespace-nowrap text-[#2c2c10] shadow-[inset_0_0_0_2px_#ffffa0]">MecSoft_Font-1 -30</article>

      <!-- iterations slider -->
      <article class="absolute top-[1021px] left-[278px] flex h-[49px] w-[420px] overflow-hidden rounded-lg border-2 border-[#333] bg-[linear-gradient(#fcfcfc,#e0e0e0_45%,#c8c8c8)] text-[24px]">
        <label for="iter" class="flex w-[137px] items-center justify-center border-r-2 border-[#333] bg-[linear-gradient(#e4e4ec,#c4c4d0_11px,#a0a0b0_11px,#8c8c9c)] pb-[2px]">iterations</label>
        <div class="relative flex-1">
          <svg class="absolute inset-0 size-full" aria-hidden="true"><path d="M22.500 10v13h236V10M46.500 16v7M69.500 16v7M93.500 16v7M117.500 16v7M140.500 10v13M164.500 16v7M187.500 16v7M211.500 16v7M235.500 16v7" fill="none" stroke="#aaa" stroke-width="1.500"/><path d="M104 22h56v6h-56z" fill="#d6d6d6"/><path d="M117 14.500l7.500 8-7.500 8-7.500-8z" fill="#fff" stroke="#000" stroke-width="3"/></svg>
          <input id="iter" type="range" min="0" max="10" value="4" class="absolute inset-0 size-full opacity-0">
          <output for="iter" class="absolute top-0 left-[134px] leading-[43px]">4</output>
        </div>
      </article>

      <!-- toggle -->
      <article class="absolute top-[1075px] left-[452px] flex h-[53px] w-[246px] items-center rounded-lg border-2 border-[#222] bg-[linear-gradient(#e8e8f0,#c4c4d0_18px,#a0a0b0_18px,#8c8c9c)] text-[24px]">
        <span class="flex-1 pr-1 text-center">Toggle</span>
        <button class="mr-px h-[45px] w-[111px] rounded-sm border-2 border-black bg-linear-to-b from-[#555] to-[#383838] pb-1 font-['Liberation_Mono',monospace] text-[30px] leading-[36px] text-[#e8e8e8] shadow-[inset_0_0_0_2px_#8a8a8a]">True</button>
      </article>

      <!-- recent components bar -->
      <div class="absolute bottom-0 left-0 flex h-[15px] w-[220px] items-start overflow-hidden border-t-2 border-r-2 border-black bg-linear-to-b from-white to-[#e8e8e8]">
        <svg class="h-[13px] w-[209px] shrink-0" viewBox="0 0 209 13"><path d="M7 13c0-5 4-6 8-5" fill="none" stroke="#222" stroke-width="3.500"/><path d="M12 5l11 1-7 8z" fill="#222"/><path d="M48 14l16-9 11 4v6" fill="none" stroke="#333" stroke-width="2"/><path d="M89 14l6-9h20l6 9z" fill="#222"/><path d="M104 13l4-6 5 1" stroke="#ccc" stroke-width="2" fill="none"/><path d="M131 14l6-9h20l6 9z" fill="#444"/><path d="M140 13c3-7 12-7 15 0" stroke="#bbb" stroke-width="2" fill="none"/><path d="M177 8h13l8 6h-20z" fill="#b4f45c" stroke="#333"/><circle cx="177" cy="8" r="2" fill="#888" stroke="#222"/><circle cx="190" cy="8" r="2" fill="#888" stroke="#222"/></svg>
        <span class="h-full flex-1 bg-[#b4b4b4]"></span>
      </div>

      <!-- canvas compass -->
      <svg class="absolute right-0 bottom-0 h-[60px] w-[84px]" viewBox="0 0 84 60"><path d="M8 36l9-5 8 6-8 6z"/><path d="M24 44c1-12 6-20 14-26" stroke="#000" stroke-width="5" fill="none"/><path d="M42 14l6-3 4 1v5h-8z"/><circle cx="56" cy="43" r="28" fill="url(#gBall)" stroke="#fff" stroke-width="3"/><circle cx="56" cy="43" r="30" fill="none" stroke="#222" stroke-width="1.200"/><path d="M56 14l8 1-5 8zM28 33l8 6-8 3zM84 43l-8 4 8 4z" fill="#fff"/></svg>
    </div>
  </main>
</div>

<script>
  // Closed contour outlines of the nested parts, smoothed into Bezier loops.
  const outlines = [
    "283,122 310,128 335,160 355,195 362,215 352,238 335,260 332,282 347,296 380,298 420,299 450,315 468,345 455,375 420,394 380,399 330,393 270,380 210,370 160,358 120,354 85,350 65,330 72,308 95,290 130,260 165,205 205,160 245,131",
    "272,175 295,185 305,210 298,235 283,262 284,300 293,322 285,333 240,328 180,315 163,300 175,275 210,222 245,186",
    "655,75 700,82 735,125 742,180 743,240 735,262 690,278 620,282 565,279 535,258 495,210 488,185 505,145 545,108 600,84",
    "650,122 673,132 674,160 668,215 655,231 610,237 575,225 552,185 565,155 600,135",
    "1020,78 1065,84 1072,98 1045,122 1000,155 940,205 908,217 865,205 838,178 850,140 885,110 940,90",
    "850,295 872,300 900,317 950,308 1000,308 1035,325 1047,350 1030,390 1030,440 1042,520 1032,550 1000,590 975,635 975,700 990,780 975,805 920,815 860,805 810,770 760,705 710,640 697,600 700,540 727,470 728,415 770,370 800,330 820,305",
    "855,352 910,361 965,357 979,375 979,440 970,515 940,570 925,630 925,700 928,750 915,765 885,765 845,740 800,685 755,625 750,570 772,490 782,435 820,385 840,358",
    "350,484 385,485 430,493 480,481 540,480 575,490 581,515 570,540 520,555 480,580 485,605 530,632 600,683 617,715 600,731 560,728 515,713 475,713 430,706 380,703 360,712 360,770 362,820 345,833 290,825 230,792 150,762 95,730 65,680 70,625 125,570 200,543 270,518 325,488",
    "360,534 405,535 427,548 420,590 430,630 438,645 425,654 380,656 330,675 306,705 304,750 290,758 230,732 165,700 138,665 145,620 190,590 260,568 320,544",
    "548,850 580,856 620,888 670,903 695,892 725,863 755,857 800,872 860,912 905,940 915,970 920,1005 943,1040 930,1062 880,1085 845,1125 855,1165 881,1218 860,1260 820,1310 770,1345 710,1356 670,1343 650,1305 660,1255 650,1243 620,1243 580,1250 540,1258 520,1280 510,1310 480,1340 490,1355 530,1375 546,1405 530,1450 500,1477 445,1490 400,1488 340,1477 270,1462 230,1435 195,1385 140,1345 127,1320 135,1275 120,1258 80,1235 65,1213 90,1185 105,1138 130,1134 158,1138 150,1115 155,1096 180,1092 230,1109 265,1090 303,1055 300,1020 288,980 295,952 315,946 335,958 365,1000 400,1027 435,1032 490,1022 545,1012 558,996 540,976 505,958 495,935 497,890 510,862",
    "360,1067 400,1072 440,1075 490,1069 518,1070 525,1085 530,1130 560,1170 600,1188 600,1200 530,1215 490,1248 460,1295 432,1330 438,1370 475,1405 475,1430 430,1448 360,1438 280,1410 235,1360 197,1325 200,1300 216,1270 205,1235 180,1205 190,1190 235,1158 280,1132 330,1085",
    "785,930 810,938 855,967 866,1000 873,1035 850,1050 790,1062 745,1090 740,1130 770,1168 815,1205 815,1235 775,1290 740,1302 722,1290 720,1240 705,1212 665,1190 665,1178 700,1140 712,1108 695,1065 660,1025 665,1015 720,998 758,973 775,940",
    "565,911 582,918 593,935 585,945 565,938 555,922",
    "970,1360 1020,1370 1060,1395 1073,1430 1050,1475 1010,1493 960,1482 920,1472 880,1485 835,1486 810,1460 812,1430 840,1410 900,1378",
    "970,1406 1000,1412 1009,1430 990,1442 960,1434 938,1420 950,1408"
  ];
  const group = document.getElementById("contours");
  for (const line of outlines) {
    const p = line.split(" ").map(s => s.split(",").map(Number)), n = p.length;
    let d = `M${p[0]}`;
    for (let i = 0; i < n; i++) {
      const a = p[(i + n - 1) % n], b = p[i], c = p[(i + 1) % n], e = p[(i + 2) % n];
      const len = Math.hypot(c[0] - b[0], c[1] - b[1]) / 3;
      const t1 = Math.hypot(c[0] - a[0], c[1] - a[1]), t2 = Math.hypot(e[0] - b[0], e[1] - b[1]);
      d += `C${b[0] + (c[0] - a[0]) / t1 * len} ${b[1] + (c[1] - a[1]) / t1 * len} ${c[0] - (e[0] - b[0]) / t2 * len} ${c[1] - (e[1] - b[1]) / t2 * len} ${c}`;
    }
    const path = document.createElementNS("http://www.w3.org/2000/svg", "path");
    path.setAttribute("d", d + "Z");
    path.setAttribute("vector-effect", "non-scaling-stroke");
    group.append(path);
  }
</script>
</body>
</html>
